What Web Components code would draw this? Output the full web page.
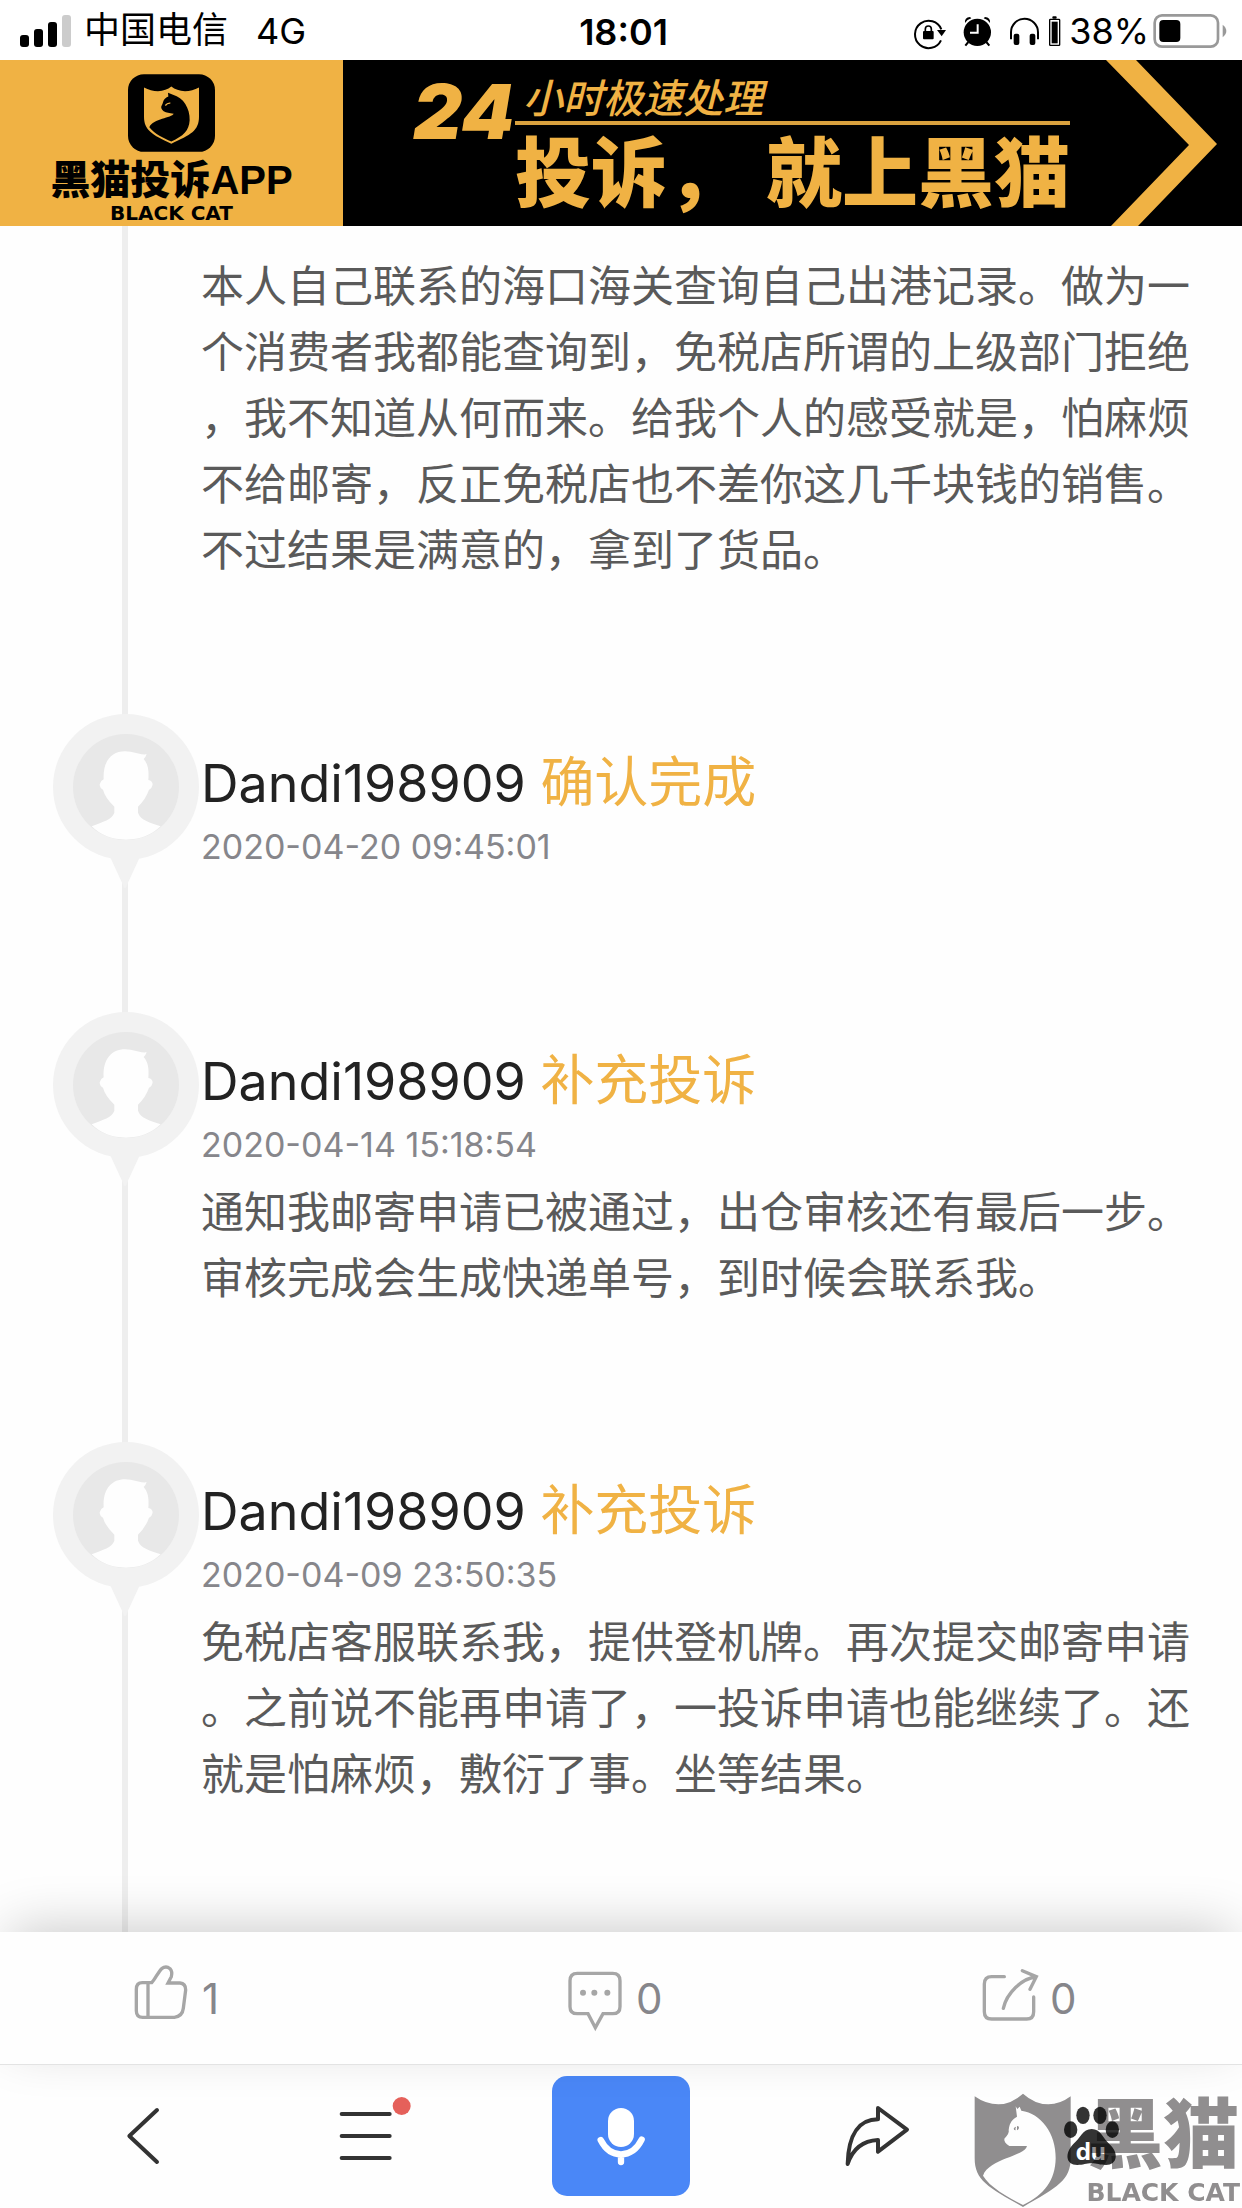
<!DOCTYPE html>
<html lang="zh-CN">
<head>
<meta charset="UTF-8">
<meta name="viewport" content="width=device-width, initial-scale=1">
<title>黑猫投诉</title>
<style>
    html, body {
        margin: 0;
        height: 100%;
    }

    body {
        display: flex;
        flex-direction: column;
        overflow: hidden;
        background: #fefefe;
        font-family: Inter, "Noto Sans CJK SC", sans-serif;
        --gold: #f0b244;
        --muted: #86868b;
        --ink: #333;
    }

    main {
        flex: 1;
        min-height: 0;
        overflow: hidden;
        display: flex;
        flex-direction: column;
    }

    main > :last-child {
        flex: 1 0 auto;
    }
</style>
</head>
<body>
    <status-bar></status-bar>
    <promo-banner></promo-banner>

    <main>
        <timeline-item>本人自己联系的海口海关查询自己出港记录。做为一个消费者我都能查询到，免税店所谓的上级部门拒绝，我不知道从何而来。给我个人的感受就是，怕麻烦不给邮寄，反正免税店也不差你这几千块钱的销售。不过结果是满意的，拿到了货品。</timeline-item>
        <timeline-item user="Dandi198909" status="确认完成" time="2020-04-20 09:45:01"></timeline-item>
        <timeline-item user="Dandi198909" status="补充投诉" time="2020-04-14 15:18:54">通知我邮寄申请已被通过，出仓审核还有最后一步。审核完成会生成快递单号，到时候会联系我。</timeline-item>
        <timeline-item user="Dandi198909" status="补充投诉" time="2020-04-09 23:50:35">免税店客服联系我，提供登机牌。再次提交邮寄申请。之前说不能再申请了，一投诉申请也能继续了。还就是怕麻烦，敷衍了事。坐等结果。</timeline-item>
    </main>

    <action-bar>
        <action-button icon="like" label="点赞">1</action-button>
        <action-button icon="comment" label="评论">0</action-button>
        <action-button icon="share" label="分享">0</action-button>
    </action-bar>
    <browser-bar></browser-bar>
    <brand-watermark></brand-watermark>

<script>
class StatusBar extends HTMLElement {
    constructor() {
        super();
        this.attachShadow({ mode: 'open' });
    }

    connectedCallback() {
        this.shadowRoot.innerHTML = `
            <style>
                :host {
                    display: grid;
                    grid-template-columns: 1fr auto 1fr;
                    align-items: center;
                    height: 60px;
                    padding: 0 15px 0 20px;
                    font-size: 36px;
                    line-height: 60px;
                    color: #000;
                    background: #fff;
                }

                .left {
                    display: flex;
                    align-items: center;
                }

                .carrier {
                    margin: 0 28px 0 12px;
                    font-family: "Liberation Sans", "Noto Sans CJK SC", sans-serif;
                }

                .time {
                    font-weight: 600;
                    padding-top: 2px;
                }

                .right {
                    display: flex;
                    align-items: center;
                    justify-content: flex-end;
                    gap: 4px;
                }

                svg {
                    display: block;
                }
            </style>

            <div class="left">
                <svg width="52" height="60" viewBox="20 0 52 60">
                    <rect x="20" y="34" width="9" height="12" rx="3"/>
                    <rect x="34" y="28" width="9" height="18" rx="3"/>
                    <rect x="48" y="21" width="9" height="25" rx="3"/>
                    <rect x="62" y="14" width="9" height="32" rx="3" fill="#ccc"/>
                </svg>
                <span class="carrier">中国电信</span>
                <span>4G</span>
            </div>
            <div class="time">18:01</div>
            <div class="right">
                <svg width="152" height="60" viewBox="396 0 456 180">
                    <path d="M480 118 A41 41 0 1 1 481 85" fill="none" stroke="#000" stroke-width="6"/>
                    <path d="M468 87 h27 l-13 19z"/>
                    <rect x="426" y="90" width="32" height="25" rx="3"/>
                    <path d="M433 92 v-8 a9 9 0 0 1 18 0 v8" fill="none" stroke="#000" stroke-width="5"/>
                    <circle cx="589" cy="94" r="41"/>
                    <path d="M552 66 Q550 50 567 48 L571 52 Q558 56 552 66z M627 66 Q629 50 612 48 L608 52 Q621 56 627 66z"/>
                    <path d="M562 123 l-9 11 M616 123 l9 11" stroke="#000" stroke-width="6"/>
                    <path d="M590 70 v25 h-23" fill="none" stroke="#fff" stroke-width="6"/>
                    <path d="M690 115 V94 A40 40 0 0 1 771 94 V115" fill="none" stroke="#000" stroke-width="6"/>
                    <rect x="698" y="98" width="17" height="34" rx="6"/>
                    <rect x="746" y="98" width="17" height="34" rx="6"/>
                    <rect x="806" y="55" width="30" height="78" rx="2" fill="none" stroke="#000" stroke-width="4"/>
                    <rect x="812" y="62" width="18" height="65"/>
                    <rect x="814" y="46" width="13" height="7" rx="3"/>
                </svg>
                <span>38%</span>
                <svg width="74" height="60" viewBox="1118 0 222 180">
                    <rect x="1123" y="43" width="190" height="94" rx="22" fill="none" stroke="#999" stroke-width="8"/>
                    <rect x="1137" y="57" width="63" height="66" rx="12"/>
                    <path d="M1327 71 Q1338 80 1338 90 Q1338 100 1327 109z" fill="#999"/>
                </svg>
            </div>
        `;
    }
}

class PromoBanner extends HTMLElement {
    constructor() {
        super();
        this.attachShadow({ mode: 'open' });
    }

    connectedCallback() {
        this.shadowRoot.innerHTML = `
            <style>
                :host {
                    display: block;
                    flex: none;
                    font-family: "Liberation Sans", "Noto Sans CJK SC", sans-serif;
                }

                a {
                    display: flex;
                    height: 166px;
                    background: #000;
                    color: var(--gold);
                    text-decoration: none;
                    overflow: hidden;
                }

                .app {
                    flex: 0 0 343px;
                    box-sizing: border-box;
                    padding-top: 14px;
                    display: flex;
                    flex-direction: column;
                    align-items: center;
                    background: var(--gold);
                    color: #000;
                }

                .app-name {
                    font-size: 40px;
                    font-weight: 900;
                    line-height: 56px;
                    white-space: nowrap;
                }

                .app-name span {
                    font-weight: 700;
                }

                .app-en {
                    font: 700 20px/10px "DejaVu Sans", sans-serif;
                }

                .slogan {
                    display: flex;
                    padding: 18px 0 0 70px;
                }

                .number {
                    font: italic 900 76px/66px Inter, sans-serif;
                    width: 102px;
                }

                .lines {
                    width: 555px;
                }

                .small {
                    padding-left: 8px;
                    font-size: 40px;
                    font-style: italic;
                    font-weight: 500;
                    line-height: 43px;
                    border-bottom: 4px solid #d9a13e;
                }

                .big {
                    display: flex;
                    justify-content: space-between;
                    font-size: 76px;
                    font-weight: 900;
                    line-height: 100px;
                    white-space: nowrap;
                }

                svg {
                    display: block;
                }

                .chevron {
                    margin-left: auto;
                }
            </style>

            <a href="#app">
                <span class="app">
                    <svg width="87" height="78" viewBox="384 222 261 233">
                        <rect x="384" y="222" width="261" height="233" rx="48"/>
                        <path fill="#f0b244" d="M432 262 Q452 273 474 273 Q498 272 514 259 Q530 272 555 273 Q577 273 597 262 V350 C597 392 572 404 514 431 C456 404 432 390 432 350z"/>
                        <path d="M504 278 L519 284 C550 292 570 325 569 360 C567 392 550 407 514 424 C490 413 465 403 448 381 C460 355 515 354 521 341 C507 338 500 338 491 333 Q482 325 484 318 C492 306 486 298 505 289z"/>
                        <path d="M496 316 q6 -8 15 -7" fill="none" stroke="#f0b244" stroke-width="4"/>
                    </svg>
                    <span class="app-name">黑猫投诉<span>APP</span></span>
                    <span class="app-en">BLACK CAT</span>
                </span>
                <span class="slogan">
                    <span class="number">24</span>
                    <span class="lines">
                        <div class="small">小时极速处理</div>
                        <div class="big"><span>投诉，</span><span>就上黑猫</span></div>
                    </span>
                </span>
                <svg class="chevron" width="136" height="166" viewBox="1106 60 136 166">
                    <path fill="#f0b244" d="M1106 60 H1136 L1217 144 L1138 226 H1111 L1189 145z"/>
                </svg>
            </a>
        `;
    }
}

class TimelineItem extends HTMLElement {
    constructor() {
        super();
        this.attachShadow({ mode: 'open' });
    }

    connectedCallback() {
        const user = this.getAttribute('user');
        const hasBody = this.textContent.trim() !== '';

        this.shadowRoot.innerHTML = `
            <style>
                :host {
                    display: flex;
                    align-items: flex-start;
                    padding: 0 40px 134px 53px;
                    background: linear-gradient(#eee, #eee) 122px 0 / 6px 100% no-repeat;
                }

                :host(:not([user])) {
                    padding-top: 24px;
                }

                /* the tail of the pin may hang below a short entry */
                .pin {
                    flex: 0 0 148px;
                    height: 146px;
                }

                .pin svg {
                    display: block;
                }

                .content {
                    flex: 1;
                    min-width: 0;
                }

                h2 {
                    margin: 0;
                    padding-top: 38px;
                    font-size: 52px;
                    font-weight: 400;
                    line-height: 64px;
                    color: #222;
                    white-space: nowrap;
                }

                h2 span {
                    font-size: 54px;
                    line-height: 48px;
                    color: var(--gold);
                }

                time {
                    display: block;
                    font-size: 34px;
                    line-height: 62px;
                    color: var(--muted);
                }

                p {
                    margin: 0;
                    font-family: "Noto Sans CJK SC", sans-serif;
                    font-size: 43px;
                    line-height: 66px;
                    color: #5a5a5a;
                    line-break: anywhere;
                    text-spacing-trim: space-all;
                }
            </style>

            <div class="pin">
                ${user ? `
                <svg width="146" height="175" viewBox="159 74 438 525">
                    <path fill="#f2f2f2" d="M329 500 L366 580 Q375 612 384 580 L421 500z"/>
                    <circle cx="378" cy="293" r="219" fill="#f2f2f2"/>
                    <circle cx="378" cy="293" r="159" fill="#e8e8e8"/>
                    <path fill="#fefefe" d="M311 270 C308 215 335 186 375 186 C403 186 412 197 440 195 Q437 204 431 209 C445 225 447 245 445 272 Q457 274 458 285 Q455 299 447 301 Q437 330 414 352 V370 C422 395 450 398 482 411 Q440 451 378 451 Q315 451 275 411 C310 396 335 392 343 370 V352 Q315 325 309 301 Q299 297 299 285 Q303 273 311 270z"/>
                </svg>` : ''}
            </div>
            <div class="content">
                ${user ? `
                <h2>${user} <span>${this.getAttribute('status')}</span></h2>
                <time>${this.getAttribute('time')}</time>` : ''}
                ${hasBody ? '<p><slot></slot></p>' : ''}
            </div>
        `;
    }
}

class ActionBar extends HTMLElement {
    constructor() {
        super();
        this.attachShadow({ mode: 'open' });
    }

    connectedCallback() {
        this.shadowRoot.innerHTML = `
            <style>
                :host {
                    display: grid;
                    flex: none;
                    grid-template-columns: 434fr 414fr 394fr;
                    height: 132px;
                    background: #fefefe;
                    border-bottom: 1px solid #e3e3e3;
                    box-shadow: 0 -12px 54px -10px rgba(0, 0, 0, 0.22);
                    position: relative;
                }
            </style>
            <slot></slot>
        `;
    }
}

const ACTION_ICONS = {
    like: `<svg viewBox="402 186 162 216">
        <path d="M409 268 Q409 248 427 248 H455 C464 240 475 215 485 206 Q498 196 510 206 Q518 215 514 230 L504 249 H540 Q557 250 557 270 L550 325 Q547 350 523 352 H428 Q409 352 409 332z M444 250 V352"/>
    </svg>`,
    comment: `<svg viewBox="444 186 162 216">
        <path d="M472 220 H578 Q600 220 600 242 V320 Q600 341 578 341 H549 L526 383 L504 341 H472 Q450 341 450 320 V242 Q450 220 472 220z"/>
        <g fill="#a6a6a6" stroke="none">
            <circle cx="489" cy="278" r="9"/>
            <circle cx="523" cy="278" r="9"/>
            <circle cx="562" cy="278" r="9"/>
        </g>
    </svg>`,
    share: `<svg viewBox="426 186 162 216">
        <path d="M493 230 H455 Q433 230 433 252 V335 Q433 357 455 357 H560 Q581 357 581 335 V291 M490 325 C500 280 545 235 588 231 M547 212 L589 230 L570 268"/>
    </svg>`
};

class ActionButton extends HTMLElement {
    constructor() {
        super();
        this.attachShadow({ mode: 'open' });
    }

    connectedCallback() {
        this.shadowRoot.innerHTML = `
            <style>
                :host {
                    display: flex;
                    padding-left: 134px;
                }

                button {
                    display: flex;
                    align-items: center;
                    gap: 14px;
                    padding: 0;
                    border: 0;
                    background: none;
                    font: inherit;
                    font-size: 42px;
                    color: var(--muted);
                }

                svg {
                    display: block;
                    width: 54px;
                    height: 72px;
                    overflow: visible;
                    fill: none;
                    stroke: #a6a6a6;
                    stroke-width: 10;
                    stroke-linecap: round;
                }
            </style>
            <button aria-label="${this.getAttribute('label')}">
                ${ACTION_ICONS[this.getAttribute('icon')]}
                <span><slot></slot></span>
            </button>
        `;
    }
}

class BrowserBar extends HTMLElement {
    constructor() {
        super();
        this.attachShadow({ mode: 'open' });
    }

    connectedCallback() {
        this.shadowRoot.innerHTML = `
            <style>
                :host {
                    display: block;
                    flex: none;
                    background: #fefefe;
                }

                nav {
                    display: flex;
                    align-items: center;
                    justify-content: space-between;
                    height: 142px;
                    padding: 0 123px 1px 127px;
                }

                button {
                    padding: 0;
                    border: 0;
                    background: none;
                }

                svg {
                    display: block;
                    height: 72px;
                    overflow: visible;
                    fill: none;
                    stroke: var(--ink);
                    stroke-width: 12;
                    stroke-linecap: round;
                    stroke-linejoin: round;
                }

                .voice {
                    display: flex;
                    align-items: center;
                    justify-content: center;
                    width: 138px;
                    height: 120px;
                    border-radius: 15px;
                    background: #4a87f7;
                }

                .voice svg {
                    stroke: #fff;
                    stroke-width: 19;
                }

                text {
                    font: 700 72px Inter, sans-serif;
                }
            </style>

            <nav>
                <button aria-label="返回">
                    <svg width="56" viewBox="381 600 168 216"><path d="M471 630 L388 708 L471 786"/></svg>
                </button>
                <button aria-label="菜单">
                    <svg width="56" viewBox="1018 600 168 216">
                        <path d="M1026 642 H1170 M1026 708 H1170 M1026 774 H1170"/>
                        <circle cx="1206" cy="618" r="27" fill="#e5605a" stroke="none"/>
                    </svg>
                </button>
                <button class="voice" aria-label="语音">
                    <svg width="48" viewBox="529 600 144 216">
                        <rect x="562" y="624" width="78" height="117" rx="39" fill="#fff" stroke="none"/>
                        <path d="M540 720 Q562 763 601 763 Q641 763 663 719 M601 765 V786"/>
                    </svg>
                </button>
                <button aria-label="转发">
                    <svg width="62" viewBox="18 600 186 216">
                        <path d="M23 792 C25 700 60 658 114 658 V624 L201 689 L114 755 V720 C75 722 40 740 23 792z"/>
                    </svg>
                </button>
                <button aria-label="百度">
                    <svg width="55" viewBox="672 600 165 216">
                        <g fill="#333" stroke="none">
                            <ellipse cx="692" cy="689" rx="20" ry="25"/>
                            <ellipse cx="729" cy="646" rx="20" ry="26"/>
                            <ellipse cx="780" cy="646" rx="20" ry="26"/>
                            <ellipse cx="817" cy="689" rx="20" ry="25"/>
                            <path d="M755 687 C782 687 790 716 808 732 C838 758 832 795 798 795 C780 795 770 790 755 790 C738 790 730 795 712 795 C676 795 674 758 700 732 C720 716 728 687 755 687z"/>
                        </g>
                        <text x="752" y="781" text-anchor="middle" fill="#fff" stroke="none">du</text>
                    </svg>
                </button>
            </nav>
        `;
    }
}

class BrandWatermark extends HTMLElement {
    constructor() {
        super();
        this.attachShadow({ mode: 'open' });
    }

    connectedCallback() {
        this.shadowRoot.innerHTML = `
            <style>
                /* lies over the bottom right corner of the page */
                :host {
                    position: fixed;
                    right: 2px;
                    bottom: 0;
                    display: flex;
                    gap: 14px;
                    color: #918f90;
                    mix-blend-mode: multiply;
                    pointer-events: none;
                }

                svg {
                    display: block;
                }

                div {
                    text-align: center;
                    white-space: nowrap;
                }

                .cn {
                    font: 900 76px/88px "Liberation Sans", "Noto Sans CJK SC", sans-serif;
                }

                .en {
                    font: 700 25px/26px "DejaVu Sans", sans-serif;
                }
            </style>

            <svg width="98" height="116" viewBox="39 36 294 348">
                <path fill="#918f90" d="M41 49 Q75 73 112 73 Q150 73 186 41 Q222 73 262 73 Q297 73 329 49 V235 C329 300 290 322 186 381 C80 322 41 300 41 235z"/>
                <path fill="#fff" d="M164 79 L169 87 L176 80 L181 92 C240 100 285 160 284 235 C283 300 250 345 186 375 C140 352 85 320 66 287 C85 235 190 230 198 198 H145 Q128 187 130 176 Q146 160 143 150 C146 125 155 118 168 110z"/>
                <path fill="#918f90" d="M158 146 q3 -6 7 -6 q-3 6 -1 11 q-5 0 -6 -5z M168 138 q7 0 6 6 q-2 6 -6 7z"/>
            </svg>
            <div>
                <div class="cn">黑猫</div>
                <div class="en">BLACK CAT</div>
            </div>
        `;
    }
}

customElements.define('status-bar', StatusBar);
customElements.define('promo-banner', PromoBanner);
customElements.define('timeline-item', TimelineItem);
customElements.define('action-bar', ActionBar);
customElements.define('action-button', ActionButton);
customElements.define('browser-bar', BrowserBar);
customElements.define('brand-watermark', BrandWatermark);
</script>
</body>
</html>
